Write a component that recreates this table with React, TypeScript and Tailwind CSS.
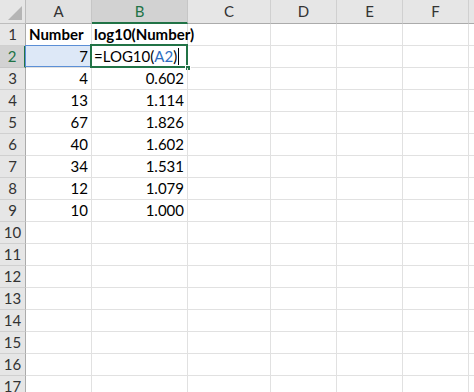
import React from "react";

const cols = ["A", "B", "C", "D", "E", "F"];
const data: [string, string][] = [
  ["Number", "log10(Number)"],
  ["7", ""],
  ["4", "0.602"],
  ["13", "1.114"],
  ["67", "1.826"],
  ["40", "1.602"],
  ["34", "1.531"],
  ["12", "1.079"],
  ["10", "1.000"],
];

export default function App() {
  const rows = Array.from({ length: 17 }, (_, i) => i + 1);
  return (
    <div
      className="w-[474px] h-[392px] overflow-hidden bg-white text-[15px] text-black"
      style={{ fontFamily: "Lato, 'Open Sans', sans-serif" }}
    >
      <div className="grid grid-cols-[26px_66px_96px_83px_66px_66px_66px_1fr] grid-rows-[24px] auto-rows-[22px]">
        {/* corner */}
        <div className="relative bg-[#e6e6e6] border-r border-b border-[#bdbdbd]">
          <div className="absolute right-[3px] bottom-[3px] w-0 h-0 border-l-[14px] border-l-transparent border-b-[14px] border-b-[#b5b5b5]" />
        </div>
        {cols.map((c) => (
          <div
            key={c}
            className={
              c === "B"
                ? "flex items-center justify-center bg-[#d2d2d2] border-r border-[#c6c6c6] border-b-2 border-b-[#217346] text-[#217346]"
                : c === "A"
                ? "flex items-center justify-center bg-[#e1e1e1] border-r border-[#c6c6c6] border-b border-b-[#ababab] text-[#333]"
                : "flex items-center justify-center bg-[#e6e6e6] border-r border-[#d0d0d0] border-b border-b-[#ababab] text-[#333]"
            }
          >
            {c}
          </div>
        ))}
        <div className="bg-[#e6e6e6] border-b border-b-[#ababab]" />

        {rows.map((r) => {
          const d = data[r - 1];
          const sel = r === 2;
          return (
            <React.Fragment key={r}>
              <div
                className={
                  sel
                    ? "flex items-center justify-center bg-[#d2d2d2] border-r-2 border-r-[#217346] border-b border-b-[#c6c6c6] text-[#217346]"
                    : "flex items-center justify-center bg-[#e6e6e6] border-r border-r-[#ababab] border-b border-b-[#d0d0d0] text-[#333]"
                }
              >
                {r}
              </div>
              {/* A */}
              <div
                className={
                  sel
                    ? "relative flex items-center justify-end pr-[3px] bg-[#dde8f7] border-r border-b border-[#e1e1e1]"
                    : "flex items-center justify-end pr-[3px] border-r border-b border-[#e1e1e1]"
                }
              >
                {sel && <div className="absolute -left-[1px] -top-[1px] right-0 bottom-0 border border-[#5b8fd6]" />}
                {d && (r === 1 ? <span className="font-bold w-full pl-[3px]">{d[0]}</span> : <span className="relative">{d[0]}</span>)}
              </div>
              {/* B */}
              <div className="relative flex items-center justify-end pr-[3px] border-r border-b border-[#e1e1e1]">
                {r === 1 && d && <span className="font-bold w-full pl-[2px]">{d[1]}</span>}
                {r > 2 && d && <span>{d[1]}</span>}
                {sel && (
                  <>
                    <span className="w-full pl-[2px] flex items-center">
                      =LOG10(<span className="text-[#2f6ec0]">A2</span>)
                      <span className="inline-block w-[1px] h-[17px] bg-black ml-[1px]" />
                    </span>
                    <div className="absolute -left-[2px] -top-[2px] -right-[1px] -bottom-[1px] border-2 border-[#217346]" />
                    <div className="absolute -right-[4px] -bottom-[4px] w-[6px] h-[6px] bg-[#217346] border border-white" />
                  </>
                )}
              </div>
              <div className="border-r border-b border-[#e1e1e1]" />
              <div className="border-r border-b border-[#e1e1e1]" />
              <div className="border-r border-b border-[#e1e1e1]" />
              <div className="border-r border-b border-[#e1e1e1]" />
              <div className="border-b border-[#e1e1e1]" />
            </React.Fragment>
          );
        })}
      </div>
    </div>
  );
}
